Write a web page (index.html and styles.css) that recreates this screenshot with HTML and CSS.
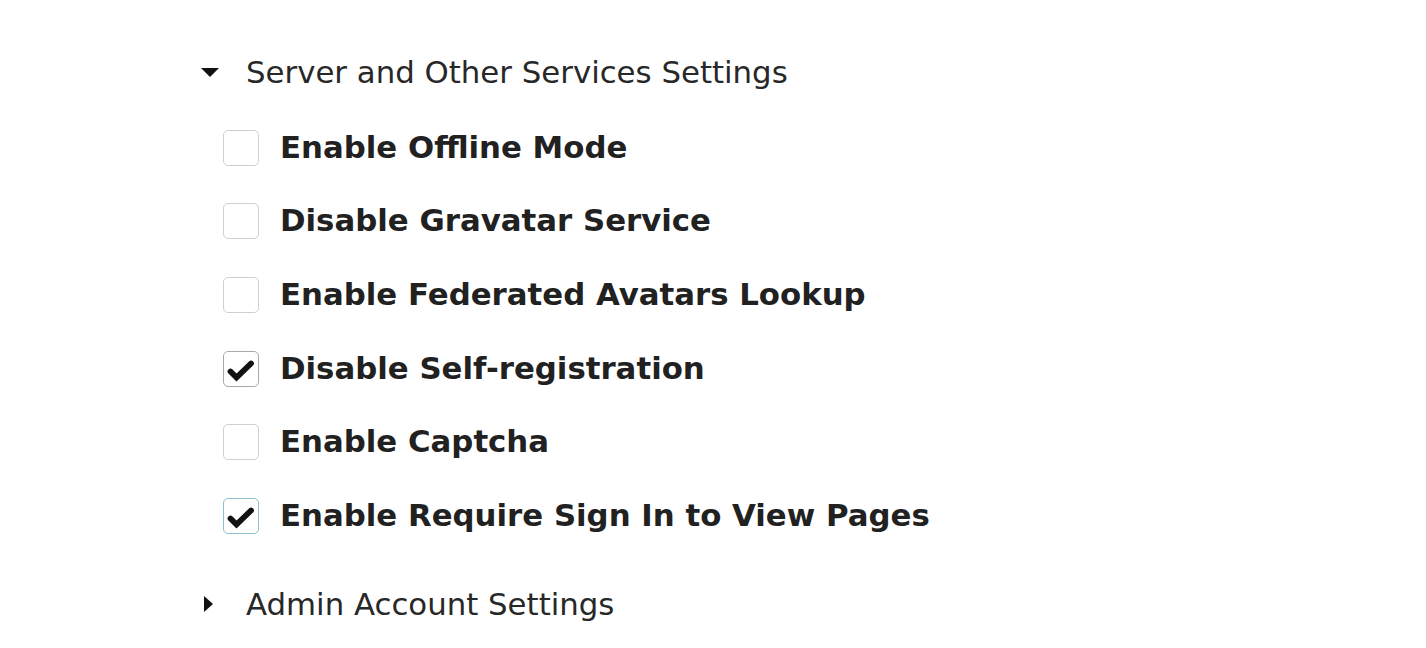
FILE: index.html
```html
<!DOCTYPE html>
<html lang="en">

<head>
    <meta charset="UTF-8">
    <title>Settings</title>
    <link rel="stylesheet" href="styles.css">
</head>

<body>
    <div class="container">
        <details class="section" open>
            <summary>
                <span class="caret caret-down"></span>
                <span class="section-title">Server and Other Services Settings</span>
            </summary>
            <div class="options">
                <label class="option">
                    <span class="box"></span>
                    <span class="option-label">Enable Offline Mode</span>
                </label>
                <label class="option">
                    <span class="box"></span>
                    <span class="option-label">Disable Gravatar Service</span>
                </label>
                <label class="option">
                    <span class="box"></span>
                    <span class="option-label">Enable Federated Avatars Lookup</span>
                </label>
                <label class="option">
                    <span class="box checked">
                        <svg viewBox="0 0 34 34"><path d="M6.5 19.5 L12.5 25.5 L27 11.5" fill="none" stroke="#111" stroke-width="5.8" stroke-linecap="round" stroke-linejoin="miter"/></svg>
                    </span>
                    <span class="option-label">Disable Self-registration</span>
                </label>
                <label class="option">
                    <span class="box"></span>
                    <span class="option-label">Enable Captcha</span>
                </label>
                <label class="option">
                    <span class="box checked focused">
                        <svg viewBox="0 0 34 34"><path d="M6.5 19.5 L12.5 25.5 L27 11.5" fill="none" stroke="#111" stroke-width="5.8" stroke-linecap="round" stroke-linejoin="miter"/></svg>
                    </span>
                    <span class="option-label">Enable Require Sign In to View Pages</span>
                </label>
            </div>
        </details>
        <details class="section">
            <summary>
                <span class="caret caret-right"></span>
                <span class="section-title">Admin Account Settings</span>
            </summary>
        </details>
    </div>
</body>

</html>
```

FILE: styles.css
```css
body {
    font-family: "DejaVu Sans", sans-serif;
    margin: 0;
    padding: 0;
    background-color: #fff;
    color: #212121;
}

.container {
    padding: 51px 0 0 201px;
}

.section summary {
    list-style: none;
    display: flex;
    align-items: center;
    height: 42px;
    cursor: pointer;
}

.section summary::-webkit-details-marker {
    display: none;
}

.caret {
    width: 0;
    height: 0;
    display: inline-block;
}

.caret-down {
    border-left: 9px solid transparent;
    border-right: 9px solid transparent;
    border-top: 9px solid #111;
    margin-right: 27px;
}

.caret-right {
    border-top: 8px solid transparent;
    border-bottom: 8px solid transparent;
    border-left: 9px solid #111;
    margin-left: 3px;
    margin-right: 33px;
}

.section-title {
    font-size: 30.8px;
    color: #282828;
}

.options {
    padding: 17px 0 31px 22px;
}

.option {
    display: flex;
    align-items: center;
    height: 73.6px;
    cursor: pointer;
}

.box {
    width: 34px;
    height: 34px;
    border: 1.5px solid #d0d0d0;
    border-radius: 5px;
    display: flex;
    align-items: center;
    justify-content: center;
    margin: 2px 21px 0 0;
    box-sizing: content-box;
}

.box.checked {
    border-color: #a8a8a8;
}

.box.focused {
    border-color: #8cc3cc;
}

.box svg {
    width: 34px;
    height: 34px;
}

.option-label {
    font-size: 30.8px;
    font-weight: bold;
    color: #212121;
}
```
